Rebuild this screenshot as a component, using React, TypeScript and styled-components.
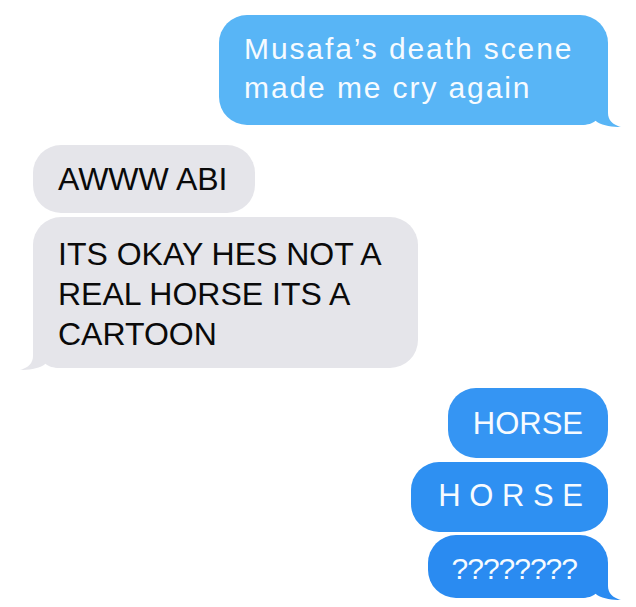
import styled, {createGlobalStyle} from "styled-components";

const GlobalStyle = createGlobalStyle`
  html, body {
    margin: 0;
    padding: 0;
    background: #ffffff;
  }
  body {
    font-family: "Liberation Sans", Arial, sans-serif;
    -webkit-font-smoothing: antialiased;
  }
`

const Thread = styled.div`
  width: 636px;
  height: 607px;
  box-sizing: border-box;
  padding: 15px 28px 0 33px;
  display: flex;
  flex-direction: column;
  overflow: hidden;
`

const Bubble = styled.div<{
    $me?: boolean,
    $bg: string,
    $top: number,
    $pad: string,
    $size: number,
    $line: number,
    $tracking?: number,
    $max?: number,
}>`
  position: relative;
  align-self: ${props => props.$me ? "flex-end" : "flex-start"};
  width: fit-content;
  max-width: ${props => props.$max ? `${props.$max}px` : "none"};
  box-sizing: border-box;
  margin-top: ${props => props.$top}px;
  padding: ${props => props.$pad};
  border-radius: 28px;
  background: ${props => props.$bg};
  color: ${props => props.$me ? "#f6fbff" : "#0a0a0a"};
  font-size: ${props => props.$size}px;
  line-height: ${props => props.$line}px;
  letter-spacing: ${props => props.$tracking ?? 0}px;
  white-space: pre-wrap;
`

const Label = styled.span`
  position: relative;
  z-index: 1;
`

// tail box: bubble edge at x=29, bubble bottom at y=30
const Tail = styled.svg<{ $me?: boolean }>`
  position: absolute;
  z-index: 0;
  bottom: -2px;
  width: 42px;
  height: 32px;
  ${props => props.$me ? "right: -13px;" : "left: -13px; transform: scaleX(-1);"}
`

const BubbleTail = ({me, color}: { me?: boolean, color: string }) => (
    <Tail $me={me} viewBox="0 0 42 32">
        <path
            d="M0 0 L29 0 L29 18 C29 25 33.5 30 42 31.8 C33 32.4 22 30.5 16.5 25.8 C13.5 28.6 9 30 2 30 L0 30 Z"
            fill={color}/>
    </Tail>
)

const SKY = "#58b5f6"
const GREY = "#e5e5ea"

const App = () => {
    return (
        <>
            <GlobalStyle/>
            <Thread>
                <Bubble $me $bg={SKY} $top={0} $pad="14px 25px 18px 25px" $size={30} $line={39}
                        $tracking={1.9} $max={389}>
                    <BubbleTail me color={SKY}/>
                    <Label>Musafa’s death scene made me cry again</Label>
                </Bubble>

                <Bubble $bg={GREY} $top={20} $pad="14px 28px 14px 25px" $size={32} $line={40}>
                    <Label>AWWW ABI</Label>
                </Bubble>
                <Bubble $bg={GREY} $top={4} $pad="17px 26px 14px 25px" $size={32} $line={40} $max={385}>
                    <BubbleTail color={GREY}/>
                    <Label>ITS OKAY HES NOT A REAL HORSE ITS A CARTOON</Label>
                </Bubble>

                <Bubble $me $bg="#3595f3" $top={20} $pad="16px 25px 14px 25px" $size={31} $line={40}>
                    <Label>HORSE</Label>
                </Bubble>
                <Bubble $me $bg="#2e90f2" $top={4} $pad="14px 25px 16px 27px" $size={31} $line={40}>
                    <Label>H O R S E</Label>
                </Bubble>
                <Bubble $me $bg="#2a8bf1" $top={3} $pad="14px 31px 9px 24px" $size={30} $line={40}
                        $tracking={-1}>
                    <BubbleTail me color="#2a8bf1"/>
                    <Label>????????</Label>
                </Bubble>
            </Thread>
        </>
    )
}

export default App
